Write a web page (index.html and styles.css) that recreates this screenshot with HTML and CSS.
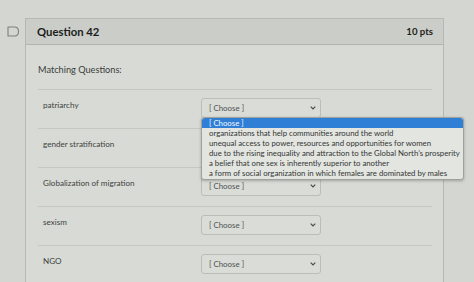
FILE: index.html
```html
<!DOCTYPE html>
<html>
<head>
<meta charset="utf-8">
<link rel="stylesheet" href="styles.css">
</head>
<body>
<div class="page">
  <div class="flag">
    <svg width="13" height="11" viewBox="0 0 13 11"><path d="M1 1 H7.5 Q11.5 1 11.5 5.5 Q11.5 10 7.5 10 H1 Z" fill="none" stroke="#7d807c" stroke-width="1.1" stroke-linejoin="round"/></svg>
  </div>
  <div class="card">
    <div class="header">
      <span class="qtitle">Question 42</span>
      <span class="pts">10 pts</span>
    </div>
    <div class="body">
      <p class="intro">Matching Questions:</p>
      <div class="rows">
        <div class="row">
          <span class="label">patriarchy</span>
          <div class="select-wrap">
            <div class="select"><span>[ Choose ]</span><svg class="chev" width="6" height="4" viewBox="0 0 6 4"><path d="M0.7 0.7 L3 3 L5.3 0.7" fill="none" stroke="#4a4d4b" stroke-width="1.2"/></svg></div>
            <ul class="menu">
              <li class="active">[ Choose ]</li>
              <li>organizations that help communities around the world</li>
              <li>unequal access to power, resources and opportunities for women</li>
              <li>due to the rising inequality and attraction to the Global North’s prosperity</li>
              <li>a belief that one sex is inherently superior to another</li>
              <li>a form of social organization in which females are dominated by males</li>
            </ul>
          </div>
        </div>
        <div class="row">
          <span class="label">gender stratification</span>
          <div class="select-wrap">
            <div class="select"><span>[ Choose ]</span><svg class="chev" width="6" height="4" viewBox="0 0 6 4"><path d="M0.7 0.7 L3 3 L5.3 0.7" fill="none" stroke="#4a4d4b" stroke-width="1.2"/></svg></div>
          </div>
        </div>
        <div class="row">
          <span class="label">Globalization of migration</span>
          <div class="select-wrap">
            <div class="select"><span>[ Choose ]</span><svg class="chev" width="6" height="4" viewBox="0 0 6 4"><path d="M0.7 0.7 L3 3 L5.3 0.7" fill="none" stroke="#4a4d4b" stroke-width="1.2"/></svg></div>
          </div>
        </div>
        <div class="row">
          <span class="label">sexism</span>
          <div class="select-wrap">
            <div class="select"><span>[ Choose ]</span><svg class="chev" width="6" height="4" viewBox="0 0 6 4"><path d="M0.7 0.7 L3 3 L5.3 0.7" fill="none" stroke="#4a4d4b" stroke-width="1.2"/></svg></div>
          </div>
        </div>
        <div class="row">
          <span class="label">NGO</span>
          <div class="select-wrap">
            <div class="select"><span>[ Choose ]</span><svg class="chev" width="6" height="4" viewBox="0 0 6 4"><path d="M0.7 0.7 L3 3 L5.3 0.7" fill="none" stroke="#4a4d4b" stroke-width="1.2"/></svg></div>
          </div>
        </div>
      </div>
    </div>
  </div>
</div>
</body>
</html>
```
FILE: styles.css
```css
html, body {
  margin: 0;
  padding: 0;
  background: #d4d6d1;
  font-family: Lato, "Open Sans", sans-serif;
  color: #3c3f3d;
  height: 282px;
  overflow: hidden;
}
.page {
  display: flex;
  align-items: flex-start;
  padding-top: 18px;
}
.flag {
  width: 25px;
  padding-top: 8px;
  padding-left: 7px;
  box-sizing: border-box;
  line-height: 0;
}
.card {
  width: 419px;
  height: 270px;
  box-sizing: border-box;
  border: 1px solid #b6b8b3;
  border-bottom: none;
  background: #d8dad5;
}
.header {
  height: 26px;
  box-sizing: border-box;
  background: #cbcdc8;
  border-bottom: 1px solid #b2b4af;
  display: flex;
  align-items: center;
  justify-content: space-between;
  padding: 0 10px 0 11px;
}
.qtitle {
  font-size: 11.3px;
  font-weight: 700;
  color: #1a1d1c;
}
.pts {
  font-size: 9.6px;
  font-weight: 700;
  color: #1f2321;
}
.body {
  padding: 0 11px 0 12px;
}
.intro {
  margin: 0;
  padding-top: 19px;
  font-size: 9.2px;
  line-height: 12px;
  color: #383c3a;
  height: 25px;
  border-bottom: 1px solid #c4c6c1;
}
.rows {
  display: flex;
  flex-direction: column;
}
.row {
  display: flex;
  align-items: flex-start;
  height: 38px;
  border-bottom: 1px solid #c5c7c2;
  padding-left: 5px;
}
.row:last-child { border-bottom: none; }
.label {
  width: 158px;
  padding-top: 10px;
  font-size: 8.1px;
  line-height: 10px;
  color: #3e4240;
}
.select-wrap {
  position: relative;
  margin-top: 8px;
}
.select {
  width: 120px;
  height: 20px;
  box-sizing: border-box;
  border: 1px solid #bbbdb8;
  border-radius: 3px;
  background: #dadcd7;
  display: flex;
  align-items: center;
  justify-content: space-between;
  padding: 0 4px 0 7px;
  font-size: 7.9px;
  color: #4e5250;
}
.chev {
  display: block;
}
.menu {
  position: absolute;
  top: 19px;
  left: 0;
  width: 261px;
  margin: 0;
  padding: 0 0 1px 0;
  list-style: none;
  background: #e3e5e1;
  border: 1px solid #9fa19d;
  border-radius: 3px;
  box-shadow: 0 1px 3px rgba(0,0,0,0.25);
  font-size: 7.8px;
  line-height: 10px;
  color: #333634;
  z-index: 5;
}
.menu li {
  padding-left: 7px;
  white-space: nowrap;
}
.menu li.active {
  background: #2e7fd5;
  color: #f4f8ff;
  border-radius: 3px 3px 0 0;
}
```
